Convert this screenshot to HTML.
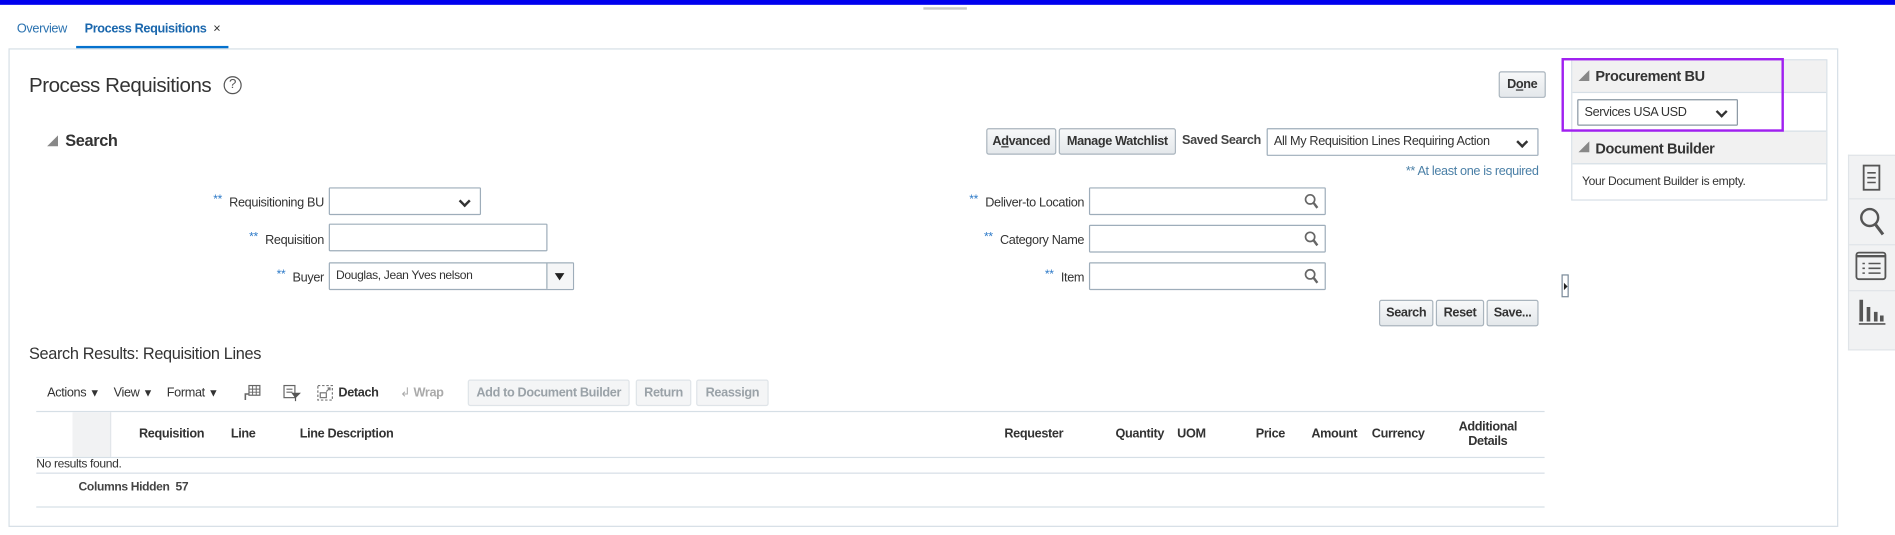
<!DOCTYPE html>
<html><head><meta charset="utf-8"><style>
*{box-sizing:border-box;margin:0;padding:0}
html,body{width:1895px;height:535px;overflow:hidden;background:#fff}
#w{position:absolute;left:0;top:0;width:1568px;height:443px;transform:scale(1.2086);transform-origin:0 0;font-family:"Liberation Sans",Arial,sans-serif;color:#333;font-size:10.5px;letter-spacing:-0.3px}
.a{position:absolute;white-space:nowrap}
.btn{position:absolute;height:22px;border:1px solid #a9b4bd;border-radius:2px;background:linear-gradient(#f7f8f9,#e4e8eb);font-weight:bold;font-size:10.5px;color:#333;text-align:center;line-height:20px;white-space:nowrap}
.dis{position:absolute;height:22px;border:1px solid #dfe4e8;background:#f4f5f6;color:#9aa2a8;font-weight:bold;font-size:10.5px;text-align:center;line-height:20px;border-radius:2px;white-space:nowrap}
.inp{position:absolute;height:23px;border:1px solid #9eadba;background:#fff;border-radius:1px}
.lbl{position:absolute;text-align:right;font-size:10.5px;color:#333;line-height:21px;white-space:nowrap}
.st{color:#2f7bc8;font-size:10px;vertical-align:3px;margin-right:6px}
.chev{position:absolute;right:9px;top:7px;width:7px;height:7px;border-right:2px solid #333;border-bottom:2px solid #333;transform:rotate(45deg)}
.mag{position:absolute;right:5px;top:4px}
.th{position:absolute;top:353px;font-weight:bold;font-size:10.5px;color:#333}
.hl{position:absolute;height:1px;background:#d6dfe6}
</style></head><body><div id="w">
<div class="a" style="left:0;top:0;width:1568px;height:4px;background:#0000ee"></div>
<div class="a" style="left:764px;top:6px;width:36px;height:2px;background:#c8c8c8"></div>
<div class="a" style="left:14px;top:18px;color:#2a72b0">Overview</div>
<div class="a" style="left:70px;top:18px;color:#1a67ad;font-weight:bold">Process Requisitions <span style="color:#333;font-weight:normal;margin-left:3px">×</span></div>
<div class="a" style="left:63px;top:38px;width:126px;height:2px;background:#0572ce"></div>
<div class="a" style="left:7px;top:40px;width:1514px;height:396px;border:1px solid #d6dfe6"></div>
<div class="a" style="left:24px;top:61px;font-size:17px;letter-spacing:-0.4px;color:#333">Process Requisitions</div>
<div class="a" style="left:185px;top:63px;width:15px;height:15px;border:1.3px solid #555;border-radius:50%;font-size:11px;text-align:center;line-height:13px;color:#555;letter-spacing:0">?</div>
<div class="btn" style="left:1240px;top:59px;width:39px">D<u>o</u>ne</div>
<div class="a" style="left:39px;top:112px;width:0;height:0;border-left:9px solid transparent;border-bottom:9px solid #888"></div>
<div class="a" style="left:54px;top:109px;font-size:13.5px;font-weight:bold;color:#333">Search</div>
<div class="btn" style="left:816px;top:106px;width:58px">A<u>d</u>vanced</div>
<div class="btn" style="left:876px;top:106px;width:97px">Manage Watchlist</div>
<div class="a" style="left:978px;top:110px;font-weight:bold;color:#444">Saved Search</div>
<div class="inp" style="left:1048px;top:106px;width:225px"><span class="a" style="left:5px;top:4px">All My Requisition Lines Requiring Action</span><div class="chev"></div></div>
<div class="a" style="left:1150px;top:136px;width:123px;text-align:right;color:#4a7fa6">** At least one is required</div>
<div class="lbl" style="left:100px;top:155px;width:168px"><span class="st">**</span>Requisitioning BU</div>
<div class="inp" style="left:272px;top:155px;width:126px"><div class="chev"></div></div>
<div class="lbl" style="left:100px;top:186px;width:168px"><span class="st">**</span>Requisition</div>
<div class="inp" style="left:272px;top:185px;width:181px"></div>
<div class="lbl" style="left:100px;top:217px;width:168px"><span class="st">**</span>Buyer</div>
<div class="inp" style="left:272px;top:217px;width:203px"><span class="a" style="left:5px;top:5px;font-size:10px">Douglas, Jean Yves nelson</span><div class="a" style="left:179px;top:0;width:22px;height:21px;border-left:1px solid #9eadba;background:#f5f6f7"><div class="a" style="left:6px;top:8px;border-left:4px solid transparent;border-right:4px solid transparent;border-top:6px solid #222"></div></div></div>
<div class="lbl" style="left:700px;top:155px;width:197px"><span class="st">**</span>Deliver-to Location</div>
<div class="lbl" style="left:700px;top:186px;width:197px"><span class="st">**</span>Category Name</div>
<div class="lbl" style="left:700px;top:217px;width:197px"><span class="st">**</span>Item</div>
<div class="inp" style="left:901px;top:155px;width:196px"><svg class="mag" width="12" height="13"><circle cx="5" cy="5" r="3.8" fill="none" stroke="#666" stroke-width="1.4"/><path d="M8 8 L11 12" stroke="#666" stroke-width="2"/></svg></div>
<div class="inp" style="left:901px;top:186px;width:196px"><svg class="mag" width="12" height="13"><circle cx="5" cy="5" r="3.8" fill="none" stroke="#666" stroke-width="1.4"/><path d="M8 8 L11 12" stroke="#666" stroke-width="2"/></svg></div>
<div class="inp" style="left:901px;top:217px;width:196px"><svg class="mag" width="12" height="13"><circle cx="5" cy="5" r="3.8" fill="none" stroke="#666" stroke-width="1.4"/><path d="M8 8 L11 12" stroke="#666" stroke-width="2"/></svg></div>
<div class="btn" style="left:1141px;top:248px;width:45px">Search</div>
<div class="btn" style="left:1188px;top:248px;width:40px">Reset</div>
<div class="btn" style="left:1230px;top:248px;width:43px">Save...</div>
<div class="a" style="left:1292px;top:227px;width:6px;height:19px;border:1px solid #7a8a99;background:#fff"><div class="a" style="left:1px;top:6px;border-top:3px solid transparent;border-bottom:3px solid transparent;border-left:3px solid #222"></div></div>
<div class="a" style="left:24px;top:285px;font-size:13.5px;color:#333">Search Results: Requisition Lines</div>
<div class="a" style="left:39px;top:319px">Actions <span style="font-size:9px">▼</span></div>
<div class="a" style="left:94px;top:319px">View <span style="font-size:9px">▼</span></div>
<div class="a" style="left:138px;top:319px">Format <span style="font-size:9px">▼</span></div>
<svg class="a" style="left:201px;top:318px" width="16" height="14"><rect x="5" y="1" width="9" height="8" fill="none" stroke="#666"/><path d="M5 4H14M5 6.5H14M8 1V9M11 1V9" stroke="#666" stroke-width=".8"/><path d="M2 13V8l3 0" fill="none" stroke="#666" stroke-width="1.3"/></svg>
<svg class="a" style="left:234px;top:318px" width="16" height="14"><rect x="1" y="1" width="9" height="10" fill="none" stroke="#666"/><path d="M3 4H8M3 6.5H8" stroke="#666"/><path d="M7 7H15L11 11V14H10V11Z" fill="#555"/></svg>
<svg class="a" style="left:262px;top:318px" width="14" height="14"><rect x="1" y="1" width="12" height="12" fill="none" stroke="#777" stroke-dasharray="2 1.5"/><rect x="3" y="7" width="5" height="4" fill="none" stroke="#777"/><path d="M8 6L11 3M9 3H11V5" stroke="#777" fill="none"/></svg>
<div class="a" style="left:280px;top:319px;font-weight:bold">Detach</div>
<div class="a" style="left:331px;top:319px;color:#aaa;font-weight:bold"><span style="font-weight:normal">↲</span> Wrap</div>
<div class="dis" style="left:387px;top:314px;width:134px">Add to Document Builder</div>
<div class="dis" style="left:526px;top:314px;width:46px">Return</div>
<div class="dis" style="left:576px;top:314px;width:60px">Reassign</div>
<div class="hl" style="left:30px;top:340px;width:1248px"></div>
<div class="a" style="left:60px;top:341px;width:32px;height:37px;background:#f1f2f3;border-right:1px solid #e2e6ea"></div>
<div class="th" style="left:115px">Requisition</div>
<div class="th" style="left:191px">Line</div>
<div class="th" style="left:248px">Line Description</div>
<div class="th" style="left:831px">Requester</div>
<div class="th" style="left:923px">Quantity</div>
<div class="th" style="left:974px">UOM</div>
<div class="th" style="left:1039px">Price</div>
<div class="th" style="left:1085px">Amount</div>
<div class="th" style="left:1135px">Currency</div>
<div class="a" style="left:1195px;top:347px;width:72px;text-align:center;font-weight:bold;line-height:12px">Additional<br>Details</div>
<div class="hl" style="left:30px;top:378px;width:1248px"></div>
<div class="a" style="left:30px;top:379px;font-size:10px">No results found.</div>
<div class="hl" style="left:30px;top:391px;width:1248px"></div>
<div class="a" style="left:65px;top:398px;font-weight:bold;font-size:10px;color:#444">Columns Hidden&nbsp; 57</div>
<div class="hl" style="left:30px;top:419px;width:1248px"></div>
<div class="a" style="left:1300px;top:49px;width:212px;height:117px;border:1px solid #d6dfe6"></div>
<div class="a" style="left:1301px;top:50px;width:210px;height:27px;background:#f1f1f1;border-bottom:1px solid #d6dfe6"></div>
<div class="a" style="left:1306px;top:58px;border-left:9px solid transparent;border-bottom:9px solid #888"></div>
<div class="a" style="left:1320px;top:56px;font-size:12px;font-weight:bold">Procurement BU</div>
<div class="inp" style="left:1305px;top:82px;width:133px;height:22px;border-color:#8a97a3"><span class="a" style="left:5px;top:4px">Services USA USD</span><div class="chev" style="top:6px"></div></div>
<div class="a" style="left:1301px;top:108px;width:210px;height:28px;background:#f1f1f1;border-top:1px solid #d6dfe6;border-bottom:1px solid #d6dfe6"></div>
<div class="a" style="left:1306px;top:117px;border-left:9px solid transparent;border-bottom:9px solid #888"></div>
<div class="a" style="left:1320px;top:116px;font-size:12px;font-weight:bold">Document Builder</div>
<div class="a" style="left:1309px;top:145px;font-size:10px">Your Document Builder is empty.</div>
<div class="a" style="left:1292px;top:48px;width:184px;height:61px;border:2px solid #a020f0"></div>
<div class="a" style="left:1529px;top:128px;width:39px;height:162px;background:#f1f2f3;border:1px solid #e0e4e8;border-right:none"></div>
<div class="hl" style="left:1530px;top:164px;width:38px;background:#e0e4e8"></div>
<div class="hl" style="left:1530px;top:202px;width:38px;background:#e0e4e8"></div>
<div class="hl" style="left:1530px;top:240px;width:38px;background:#e0e4e8"></div>
<svg class="a" style="left:1540px;top:136px" width="18" height="22"><rect x="2" y="1" width="13" height="20" fill="none" stroke="#555" stroke-width="1.5"/><path d="M5 7H12M5 11H12M5 15H12" stroke="#555" stroke-width="1.3"/></svg>
<svg class="a" style="left:1538px;top:171px" width="22" height="26"><circle cx="9" cy="9" r="7" fill="none" stroke="#555" stroke-width="2"/><path d="M14 15L20 23" stroke="#555" stroke-width="2.5"/></svg>
<svg class="a" style="left:1535px;top:208px" width="26" height="24"><rect x="1" y="1" width="24" height="22" rx="2" fill="none" stroke="#555" stroke-width="1.5"/><path d="M1 4H25" stroke="#555" stroke-width="2"/><path d="M6 10H8M11 10H21M6 14H8M11 14H21M6 18H8M11 18H21" stroke="#555" stroke-width="1.3"/></svg>
<svg class="a" style="left:1537px;top:246px" width="24" height="24"><path d="M3 2V20M9 8V20M15 12V20M20 15V20" stroke="#555" stroke-width="3"/><path d="M1 22H23" stroke="#555" stroke-width="1.3"/></svg>
</div></body></html>
